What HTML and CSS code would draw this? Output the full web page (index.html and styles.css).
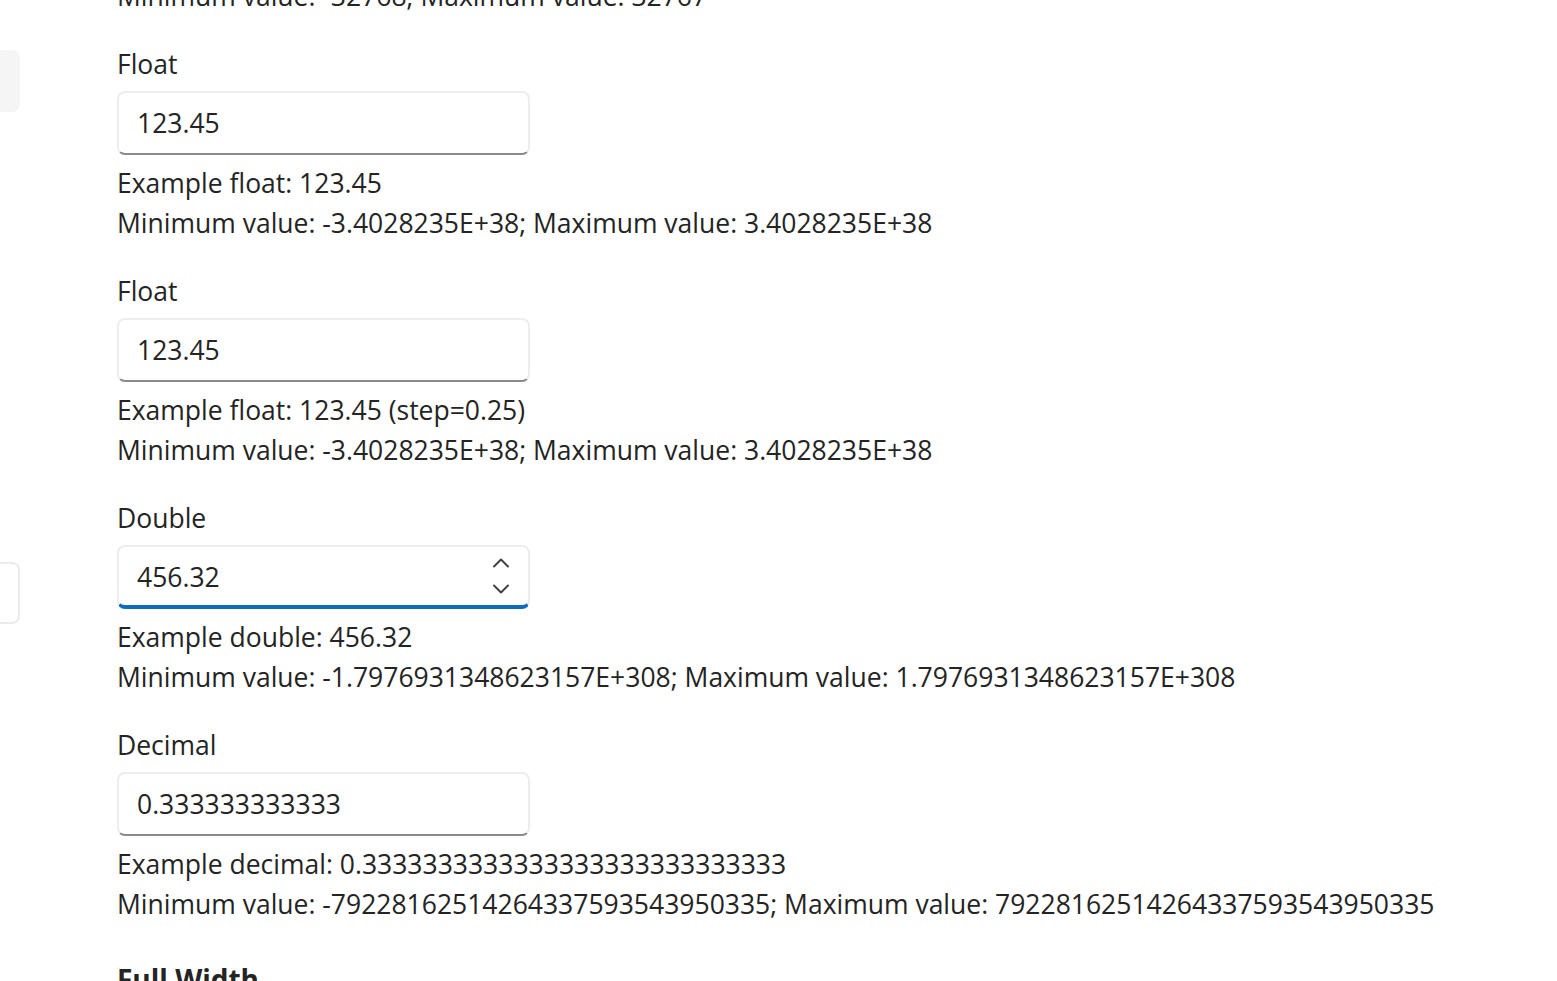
FILE: index.html
```html
<!DOCTYPE html>
<html>
<head>
	<meta charset="utf-8">
	<meta name="viewport" content="width=device-width, initial-scale=1">
	<title>Number fields</title>
	<link rel="stylesheet" href="styles.css">
</head>
<body>

<div class="page">
  <div class="rail">
    <div class="stub stub-gray"></div>
    <div class="stub stub-white"></div>
  </div>

  <div class="content">
    <div class="field">
      <div class="hint">Minimum value: -32768; Maximum value: 32767</div>
    </div>

    <div class="field">
      <label class="label">Float</label>
      <div class="input"><span class="value">123.45</span></div>
      <div class="hints">
        <div class="hint">Example float: 123.45</div>
        <div class="hint">Minimum value: -3.4028235E+38; Maximum value: 3.4028235E+38</div>
      </div>
    </div>

    <div class="field">
      <label class="label">Float</label>
      <div class="input"><span class="value">123.45</span></div>
      <div class="hints">
        <div class="hint">Example float: 123.45 (step=0.25)</div>
        <div class="hint">Minimum value: -3.4028235E+38; Maximum value: 3.4028235E+38</div>
      </div>
    </div>

    <div class="field">
      <label class="label">Double</label>
      <div class="input focused">
        <span class="value">456.32</span>
        <div class="spin">
          <svg width="18" height="10" viewBox="0 0 18 10"><path d="M2 8.5 L9 1.5 L16 8.5" fill="none" stroke="#424242" stroke-width="2" stroke-linecap="round" stroke-linejoin="round"/></svg>
          <svg width="18" height="10" viewBox="0 0 18 10"><path d="M2 1.5 L9 8.5 L16 1.5" fill="none" stroke="#424242" stroke-width="2" stroke-linecap="round" stroke-linejoin="round"/></svg>
        </div>
      </div>
      <div class="hints">
        <div class="hint">Example double: 456.32</div>
        <div class="hint">Minimum value: -1.7976931348623157E+308; Maximum value: 1.7976931348623157E+308</div>
      </div>
    </div>

    <div class="field">
      <label class="label">Decimal</label>
      <div class="input"><span class="value">0.333333333333</span></div>
      <div class="hints">
        <div class="hint">Example decimal: 0.3333333333333333333333333333</div>
        <div class="hint">Minimum value: -79228162514264337593543950335; Maximum value: 79228162514264337593543950335</div>
      </div>
    </div>

    <h2 class="section">Full Width</h2>
  </div>
</div>

</body>
</html>
```

FILE: styles.css
```css
body {
  margin: 0;
  background-color: #fff;
  color: #242424;
  font-family: "Open Sans", "Noto Sans", sans-serif;
  font-size: 26.5px;
  overflow: hidden;
}

.page {
  display: flex;
}

/* left column, mostly scrolled out of view */
.rail {
  width: 20px;
  flex-shrink: 0;
}
.stub {
  height: 62px;
  border-radius: 0 8px 8px 0;
  box-sizing: border-box;
}
.stub-gray {
  margin-top: 50px;
  background-color: #f5f5f5;
}
.stub-white {
  margin-top: 450px;
  background-color: #fff;
  border: 2px solid #ebebeb;
  border-left: none;
}

.content {
  padding-left: 97px;
  margin-top: -24px;
}

.field {
  margin-bottom: 28px;
}

.label {
  display: block;
  line-height: 40px;
}

.input {
  margin-top: 7px;
  width: 413px;
  height: 64px;
  box-sizing: border-box;
  border: 2px solid #ededed;
  border-bottom: 2px solid #8a8a8a;
  border-radius: 8px;
  padding: 0 18px;
  display: flex;
  align-items: center;
  justify-content: space-between;
  background-color: #fff;
}
.input.focused {
  border-bottom: 4px solid #0f6cbd;
  padding-top: 2px;
}
.value {
  line-height: 40px;
}

.spin {
  display: flex;
  flex-direction: column;
  gap: 16px;
  margin-top: -2px;
}
.spin svg {
  display: block;
}

.hints {
  margin-top: 8px;
}
.hint {
  line-height: 40px;
  white-space: nowrap;
}

.section {
  margin: 35px 0 0 0;
  font-size: 28px;
  line-height: 40px;
  font-weight: 700;
}
```
